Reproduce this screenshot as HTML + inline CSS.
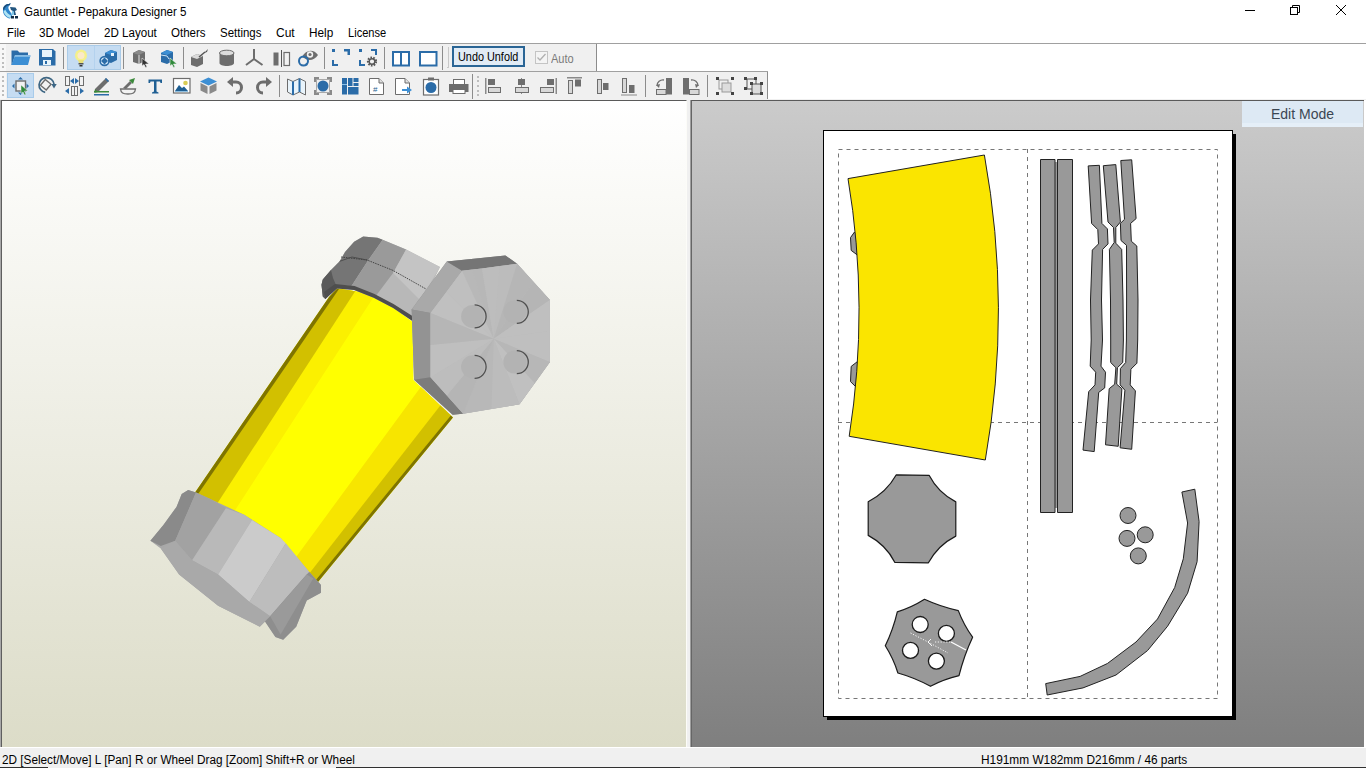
<!DOCTYPE html>
<html><head><meta charset="utf-8">
<style>
*{margin:0;padding:0;box-sizing:border-box}
html,body{width:1366px;height:768px;overflow:hidden;background:#fff;font-family:"Liberation Sans",sans-serif;font-size:12px;color:#000}
.a{position:absolute}
.t{position:absolute;white-space:nowrap;line-height:14px}
svg{position:absolute;overflow:visible}
</style></head><body>
<!-- title bar -->
<svg class="a" style="left:0;top:0" width="22" height="22" viewBox="0 0 22 22">
<path d="M3,9.5 C3,6 6,4 9,4 L10.5,3 L10,5 C8,6 8,8 9,10 C10,12 12,13 12,16 L10,18.5 C6,18 2.5,14 3,9.5 Z" fill="#2f86cc"/>
<path d="M3.5,11 C4.5,15 7,17.5 10.5,18 L11,15.5 C8.5,14.5 6.5,12.5 5.5,10 Z" fill="#aee3f3"/>
<path d="M3,9.5 C3,6 6,4 9,4 L10.5,3 L10,5 C7,5.5 5,7 4,10 Z" fill="#1d4f7c"/>
<path d="M10,7 L15.5,7.5 L17,10 L15,11 L16,15 L14,15 L13,11 L11,10 Z" fill="#22557f"/>
<path d="M12,11 L14,11.5 L13.5,15.5 L11.5,15 Z" fill="#7cc6e8"/>
<rect x="11" y="16" width="3" height="2.5" fill="#0f2a44"/><rect x="15" y="16" width="3" height="2.5" fill="#0f2a44"/>
</svg>
<div class="t" style="left:24px;top:5px;font-size:12px;transform:scaleX(0.963);transform-origin:0 0">Gauntlet - Pepakura Designer 5</div>
<svg style="left:1240px;top:0" width="126" height="22">
<line x1="1245" y1="10.5" x2="1255" y2="10.5" stroke="#000" transform="translate(-1240,0)"/>
<g transform="translate(-1240,0)" fill="none" stroke="#000" stroke-width="1">
<rect x="1290.5" y="7.5" width="7" height="7"/>
<path d="M1292.5,7.5 V5.5 H1299.5 V12.5 H1297.5"/>
<path d="M1336,5 L1346,15 M1346,5 L1336,15"/>
</g>
</svg>
<!-- menu -->
<div class="t" style="left:7px;top:26px;transform:scaleX(0.94);transform-origin:0 0">File</div>
<div class="t" style="left:39px;top:26px;transform:scaleX(0.98);transform-origin:0 0">3D Model</div>
<div class="t" style="left:104px;top:26px;transform:scaleX(0.965);transform-origin:0 0">2D Layout</div>
<div class="t" style="left:171px;top:26px;transform:scaleX(0.96);transform-origin:0 0">Others</div>
<div class="t" style="left:220px;top:26px;transform:scaleX(0.955);transform-origin:0 0">Settings</div>
<div class="t" style="left:276px;top:26px">Cut</div>
<div class="t" style="left:309px;top:26px;transform:scaleX(0.98);transform-origin:0 0">Help</div>
<div class="t" style="left:348px;top:26px;transform:scaleX(0.925);transform-origin:0 0">License</div>
<div class="a" style="left:0;top:43px;width:1366px;height:1px;background:#a0a0a0"></div>
<!-- toolbars -->
<div class="a" style="left:0;top:44px;width:597px;height:27px;background:#f0f0f0"></div>
<div class="a" style="left:0;top:71px;width:768px;height:1px;background:#a0a0a0"></div>
<div class="a" style="left:0;top:72px;width:767px;height:28px;background:#f0f0f0"></div>
<div class="a" style="left:0;top:44px;width:6px;height:27px;background:#f7f7f7"></div>
<div class="a" style="left:2px;top:48px;width:2px;height:2px;background:#bdbdbd"></div><div class="a" style="left:2px;top:53px;width:2px;height:2px;background:#bdbdbd"></div><div class="a" style="left:2px;top:57px;width:2px;height:2px;background:#bdbdbd"></div><div class="a" style="left:2px;top:62px;width:2px;height:2px;background:#bdbdbd"></div><div class="a" style="left:2px;top:66px;width:2px;height:2px;background:#bdbdbd"></div>
<svg style="left:11px;top:49px" width="20" height="17" viewBox="0 0 20 17"><path d="M0.5,1.5 H6.5 L8.5,3.5 H17 V6 H4 L1,16 H0.5 Z" fill="#2b6ca8"/><path d="M4,6.5 H19.5 L17,16 H0.5 Z" fill="#3d8fd4"/><path d="M4,6.5 H19.5 L19,8 H3.6 Z" fill="#7db7e3"/></svg>
<svg style="left:39px;top:49px" width="17" height="17" viewBox="0 0 17 17"><path d="M0,0 H14 L16.5,2.5 V16.5 H0 Z" fill="#2b6ca8"/><rect x="3" y="1" width="10" height="7" fill="#e8f4fb"/><rect x="4" y="11" width="8" height="5" fill="#e8f4fb"/><rect x="6" y="12" width="2" height="3" fill="#2b6ca8"/></svg>
<div class="a" style="left:63px;top:47px;width:1px;height:22px;background:#8c8c8c"></div>
<div class="a" style="left:67px;top:45px;width:54px;height:25px;background:#c5dcf2;border:1px solid #aacbe8"></div>
<div class="a" style="left:94px;top:46px;width:1px;height:23px;background:#b4d2ee"></div>
<svg style="left:73px;top:49px" width="16" height="18" viewBox="0 0 16 18"><circle cx="8" cy="6.5" r="6" fill="#f4f08a"/><circle cx="8" cy="6.5" r="3.5" fill="#fbe9c8"/><path d="M5,11 H11 L10,14 H6 Z" fill="#e8e07a"/><rect x="5.5" y="14" width="5" height="1.5" fill="#555"/><rect x="6.5" y="16" width="3" height="1.5" fill="#333"/></svg>
<svg style="left:99px;top:50px" width="19" height="17" viewBox="0 0 19 17"><path d="M6,3 L12,0 L18,2 V10 L12,13 L6,11 Z" fill="#2b6ca8"/><path d="M6,3 L12,0 L18,2 L12,5 Z" fill="#3d8fd4"/><rect x="12" y="3" width="3" height="3" fill="#e6f2fb"/><circle cx="5.5" cy="11" r="5.2" fill="#2b6ca8"/><circle cx="5.5" cy="11" r="3.6" fill="#dcefff"/><path d="M5.5,7.4 L9,11 L5.5,14.6 L2,11 Z" fill="#2b6ca8"/></svg>
<div class="a" style="left:123px;top:47px;width:1px;height:22px;background:#8c8c8c"></div>
<svg style="left:132px;top:50px" width="18" height="18" viewBox="0 0 18 18"><path d="M1,3 L7,0 L13,2 V11 L7,14 L1,12 Z" fill="#6d6d6d"/><path d="M1,3 L7,0 L13,2 L7,5 Z" fill="#8a8a8a"/><path d="M7,5 V14" stroke="#e8e8e8" stroke-width="1"/><path d="M10,8 L17,14 L13.5,14 L15,17 L13.5,17.5 L12,14.5 L10,16 Z" fill="#333" stroke="#eee" stroke-width="0.6"/></svg>
<svg style="left:160px;top:50px" width="18" height="18" viewBox="0 0 18 18"><path d="M1,3 L7,0 L13,2 V11 L7,14 L1,12 Z" fill="#2b6ca8"/><path d="M1,3 L7,0 L13,2 L7,5 Z" fill="#3d8fd4"/><path d="M1,5 L7,6 L9,9" stroke="#cfe6f7" stroke-width="1" fill="none"/><path d="M10,8 L17,14 L13.5,14 L15,17 L13.5,17.5 L12,14.5 L10,16 Z" fill="#2f8a3a" stroke="#eee" stroke-width="0.6"/></svg>
<div class="a" style="left:183px;top:47px;width:1px;height:22px;background:#8c8c8c"></div>
<svg style="left:190px;top:49px" width="19" height="19" viewBox="0 0 19 19"><path d="M1,8 L7,5 L13,7 V15 L7,18 L1,16 Z" fill="#6d6d6d"/><path d="M1,8 L7,5 L13,7 L7,10 Z" fill="#dadada"/><path d="M9,8 L15,3" stroke="#555" stroke-width="1.5"/><path d="M14,4 L18,0 L17,3 Z" fill="#555"/></svg>
<svg style="left:219px;top:50px" width="16" height="17" viewBox="0 0 16 17"><path d="M0.5,3 V13 C0.5,17 15,17 15,13 V3 Z" fill="#6d6d6d"/><ellipse cx="7.75" cy="3" rx="7.25" ry="2.8" fill="#dcdcdc" stroke="#6d6d6d" stroke-width="1"/></svg>
<svg style="left:245px;top:49px" width="19" height="18" viewBox="0 0 19 18"><path d="M9,0 V10 L1,16 M9,10 L17.5,16" stroke="#6d6d6d" stroke-width="2" fill="none"/></svg>
<svg style="left:273px;top:50px" width="18" height="18" viewBox="0 0 18 18"><rect x="0.5" y="2.5" width="5" height="13" fill="#6d6d6d"/><rect x="8" y="0" width="1" height="17" fill="#555"/><rect x="11" y="2.5" width="5.5" height="13" fill="#f2f2f2" stroke="#6d6d6d" stroke-width="1.2"/></svg>
<svg style="left:298px;top:49px" width="21" height="18" viewBox="0 0 21 18"><path d="M4,8 C8,0 16,0 20,6 C16,12 10,12 6,9 Z" fill="#6d6d6d"/><circle cx="12" cy="5.5" r="3.2" fill="#f0f0f0"/><circle cx="12" cy="5.5" r="1.6" fill="#6d6d6d"/><circle cx="5.5" cy="12" r="4.5" fill="none" stroke="#2b6ca8" stroke-width="2"/><path d="M7,15 L10,13 L9,17 Z" fill="#2b6ca8"/></svg>
<div class="a" style="left:324px;top:47px;width:1px;height:22px;background:#8c8c8c"></div>
<svg style="left:332px;top:49px" width="19" height="18" viewBox="0 0 19 18"><g fill="#2b6ca8"><rect x="0" y="0" width="3" height="3"/><path d="M12,0 H18 V6 H15.5 V2.5 H12 Z"/><path d="M0,11 H2 V15 H6 V17 H0 Z"/><path d="M16,11 H18 V17 H12 V15 H16 Z" fill="#2b6ca8" opacity="0"/></g></svg>
<svg style="left:359px;top:49px" width="19" height="18" viewBox="0 0 19 18"><g fill="#2b6ca8"><rect x="0" y="0" width="3" height="3"/><path d="M12,0 H18 V6 H16 V2 H12 Z"/><path d="M0,11 H2 V15 H6 V17 H0 Z"/></g><circle cx="13" cy="12.5" r="4" fill="none" stroke="#555" stroke-width="2.2" stroke-dasharray="1.6,1.2"/><circle cx="13" cy="12.5" r="2.8" fill="none" stroke="#555" stroke-width="1.4"/></svg>
<div class="a" style="left:384px;top:47px;width:1px;height:22px;background:#8c8c8c"></div>
<svg style="left:392px;top:51px" width="18" height="16" viewBox="0 0 18 16"><rect x="1" y="1" width="16" height="13.5" fill="#fff" stroke="#2b6ca8" stroke-width="2"/><rect x="8" y="1" width="2" height="13.5" fill="#2b6ca8"/></svg>
<svg style="left:419px;top:51px" width="19" height="16" viewBox="0 0 19 16"><rect x="1" y="1" width="16.5" height="13.5" fill="#fff" stroke="#2b6ca8" stroke-width="2"/></svg>
<div class="a" style="left:442px;top:46px;width:1px;height:24px;background:#8c8c8c"></div>
<div class="a" style="left:447px;top:47px;width:2px;height:21px;border-right:1px solid #c8c8c8;border-bottom:1px solid #c8c8c8"></div>
<div class="a" style="left:452px;top:46px;width:73px;height:21px;background:#e1ebf5;border:2px solid #2a6595"></div>
<div class="t" style="left:458px;top:50px;font-size:12px;transform:scaleX(0.905);transform-origin:0 0">Undo Unfold</div>
<svg style="left:535px;top:51px" width="14" height="13" viewBox="0 0 14 13"><rect x="0.5" y="0.5" width="12" height="12" fill="#f4f4f4" stroke="#c4c4c4"/><path d="M2.5,6.5 L5,9 L10.5,3" fill="none" stroke="#b0b0b0" stroke-width="1.3"/></svg>
<div class="t" style="left:551px;top:52px;font-size:12px;color:#7a7a7a;transform:scaleX(0.92);transform-origin:0 0">Auto</div>
<div class="a" style="left:596px;top:44px;width:1px;height:27px;background:#8c8c8c"></div>
<div class="a" style="left:0;top:72px;width:6px;height:28px;background:#f7f7f7"></div>
<div class="a" style="left:2px;top:76px;width:2px;height:2px;background:#bdbdbd"></div><div class="a" style="left:2px;top:80px;width:2px;height:2px;background:#bdbdbd"></div><div class="a" style="left:2px;top:85px;width:2px;height:2px;background:#bdbdbd"></div><div class="a" style="left:2px;top:90px;width:2px;height:2px;background:#bdbdbd"></div><div class="a" style="left:2px;top:94px;width:2px;height:2px;background:#bdbdbd"></div>
<div class="a" style="left:7px;top:73px;width:27px;height:25px;background:#c5dcf2;border:1px solid #a8cbea"></div>
<svg style="left:12px;top:77px" width="18" height="19" viewBox="0 0 18 19"><path d="M8.5,0 L11,2.5 H6 Z M0,9 L2.5,6.5 V11.5 Z M17,9 L14.5,6.5 V11.5 Z M8.5,18 L6,15.5 H11 Z" fill="#2b6ca8"/><rect x="4" y="4" width="9.5" height="10" fill="#f2f2f2" stroke="#6d6d6d" stroke-width="1.4"/><path d="M9,8 L16,14 L12.5,14 L14,17.5 L12.5,18 L11,15 L9,16.5 Z" fill="#2f8a3a" stroke="#eee" stroke-width="0.5"/></svg>
<svg style="left:37px;top:77px" width="20" height="17" viewBox="0 0 20 17"><path d="M8.2,15.4 A7.5,7.5 0 1 1 17,7" fill="none" stroke="#3d6684" stroke-width="1.7"/><rect x="5" y="4" width="7.5" height="7.5" transform="rotate(40 8.75 7.75)" fill="#f2f2f2" stroke="#6a6a6a" stroke-width="1.3"/><path d="M14.3,7 L19.7,7 L17,11.5 Z" fill="#3d6684"/></svg>
<svg style="left:65px;top:76px" width="20" height="20" viewBox="0 0 20 20"><rect x="0.5" y="0.5" width="4" height="9" fill="#f2f2f2" stroke="#6d6d6d"/><rect x="14.5" y="0.5" width="4" height="9" fill="#f2f2f2" stroke="#6d6d6d"/><path d="M5,5 L9,2 V8 Z M14,5 L10,2 V8 Z" fill="#2b6ca8"/><rect x="6.5" y="10.5" width="6" height="9" fill="#f2f2f2" stroke="#6d6d6d"/><rect x="9" y="10.5" width="1" height="9" fill="#6d6d6d"/><path d="M0,15 L4,12 V18 Z M19,15 L15,12 V18 Z" fill="#2b6ca8"/></svg>
<svg style="left:94px;top:77px" width="16" height="19" viewBox="0 0 16 19"><path d="M1,12 L12,1 L15,4 L4,15 L0.5,15.5 Z" fill="#6d6d6d"/><path d="M1,12 L4,15 L0.5,15.5 Z" fill="#3c8a3c"/><path d="M12,1 L15,4 L14,5 L11,2 Z" fill="#2b6ca8"/><rect x="0" y="14" width="15" height="1.5" fill="#3c8a3c"/><rect x="0" y="17" width="15" height="1.5" fill="#2b6ca8"/></svg>
<svg style="left:120px;top:78px" width="17" height="17" viewBox="0 0 17 17"><path d="M3,10 L10,3 L12,5 L6,11 Z" fill="#6d6d6d"/><path d="M9,2 L15,0 L13,6 Z" fill="#3c8a3c"/><path d="M0.5,11 H15.5 C15,15 13,16 8,16 C3,16 1,15 0.5,11 Z" fill="#f2f2f2" stroke="#6d6d6d" stroke-width="1.3"/></svg>
<svg style="left:148px;top:79px" width="15" height="15" viewBox="0 0 15 15"><path d="M0.5,0.5 H14 V4 H12.5 L12,2.5 H8.5 V12.5 L10.5,13.5 V14.5 H4 V13.5 L6,12.5 V2.5 H2.5 L2,4 H0.5 Z" fill="#1f5f93"/></svg>
<svg style="left:173px;top:78px" width="18" height="16" viewBox="0 0 18 16"><rect x="0.5" y="0.5" width="16.5" height="14.5" fill="#fff" stroke="#6d6d6d" stroke-width="1.2"/><circle cx="12.5" cy="5" r="2.3" fill="#d8cc55"/><path d="M2,13 L6,7 L9,10 L11,8.5 L15,13 Z" fill="#1f5f93"/><rect x="2" y="13" width="13" height="1" fill="#8fbfe0"/></svg>
<svg style="left:200px;top:77px" width="18" height="18" viewBox="0 0 18 18"><path d="M8.5,0.5 L17,4.5 L8.5,8.5 L0,4.5 Z" fill="#3d8fd4"/><path d="M0.5,6 L7.5,9.5 V17 L0.5,13.5 Z" fill="#8a8a8a"/><path d="M16.5,6 L9.5,9.5 V17 L16.5,13.5 Z" fill="#8a8a8a"/></svg>
<svg style="left:227px;top:77px" width="17" height="18" viewBox="0 0 17 18"><path d="M5,5 H9 A5.5,5.5 0 0 1 9,16" fill="none" stroke="#6d6d6d" stroke-width="3"/><path d="M0,5 L6,0 V10 Z" fill="#6d6d6d"/></svg>
<svg style="left:255px;top:77px" width="17" height="18" viewBox="0 0 17 18"><path d="M12,5 H8 A5.5,5.5 0 0 0 8,16" fill="none" stroke="#6d6d6d" stroke-width="3"/><path d="M17,5 L11,0 V10 Z" fill="#6d6d6d"/></svg>
<div class="a" style="left:279px;top:75px;width:1px;height:22px;background:#8c8c8c"></div>
<svg style="left:287px;top:78px" width="20" height="18" viewBox="0 0 20 18"><path d="M0.5,1 L6,3.5 L12.5,0.5 L18.5,3.5 V17 L12.5,14 L6,17 L0.5,14 Z" fill="#e9f4fb" stroke="#6d6d6d" stroke-width="1"/><rect x="5" y="3.5" width="2" height="13.5" fill="#2b6ca8"/><rect x="11.5" y="0.5" width="2" height="13.5" fill="#2b6ca8"/></svg>
<svg style="left:314px;top:77px" width="19" height="19" viewBox="0 0 19 19"><path d="M0,0 H5 V2 H2 V5 H0 Z M18,0 H13 V2 H16 V5 H18 Z M0,18 H5 V16 H2 V13 H0 Z M18,18 H13 V16 H16 V13 H18 Z" fill="#8a8a8a"/><rect x="2.5" y="2.5" width="13" height="13" fill="none" stroke="#aaa" stroke-width="1"/><circle cx="9" cy="9" r="5.5" fill="#2b6ca8"/></svg>
<svg style="left:342px;top:78px" width="17" height="17" viewBox="0 0 17 17"><g fill="#2b6ca8"><rect x="0" y="0" width="5" height="16.5"/><rect x="6" y="0" width="4.5" height="8"/><rect x="11.5" y="0" width="5" height="4"/><rect x="11.5" y="5" width="5" height="3"/><rect x="6" y="9" width="10.5" height="7.5"/></g><rect x="0" y="6" width="5" height="1" fill="#8cc0e6"/></svg>
<svg style="left:369px;top:78px" width="16" height="18" viewBox="0 0 16 18"><path d="M0.5,0.5 H10 L14.5,5 V16.5 H0.5 Z" fill="#fff" stroke="#6d6d6d" stroke-width="1"/><path d="M10,0.5 V5 H14.5" fill="#e0e0e0" stroke="#6d6d6d" stroke-width="1"/><text x="4" y="14" font-size="8" font-family="Liberation Sans" fill="#1f5f93">#</text></svg>
<svg style="left:395px;top:78px" width="18" height="18" viewBox="0 0 18 18"><path d="M0.5,0.5 H10 L14.5,5 V16.5 H0.5 Z" fill="#fff" stroke="#6d6d6d" stroke-width="1"/><path d="M10,0.5 V5 H14.5" fill="#e0e0e0" stroke="#6d6d6d" stroke-width="1"/><path d="M7,11 H12 V8.5 L17,12 L12,15.5 V13 H7 Z" fill="#3d8fd4"/></svg>
<svg style="left:423px;top:77px" width="17" height="19" viewBox="0 0 17 19"><rect x="0.5" y="2.5" width="15" height="15.5" fill="#fff" stroke="#6d6d6d" stroke-width="1.2"/><rect x="5" y="0.5" width="6" height="3" fill="#6d6d6d"/><circle cx="8" cy="10.5" r="5.5" fill="#2b6ca8"/></svg>
<svg style="left:449px;top:79px" width="20" height="15" viewBox="0 0 20 15"><rect x="4.5" y="0.5" width="11" height="5" fill="#fff" stroke="#6d6d6d" stroke-width="1"/><path d="M0,5 H19.5 V13 H16 V10.5 H4 V13 H0 Z" fill="#6d6d6d"/><rect x="4" y="10.5" width="12" height="4" fill="#fff" stroke="#6d6d6d" stroke-width="1"/></svg>
<div class="a" style="left:472px;top:74px;width:1px;height:25px;background:#8c8c8c"></div>
<div class="a" style="left:477px;top:76px;width:2px;height:2px;background:#bdbdbd"></div><div class="a" style="left:477px;top:80px;width:2px;height:2px;background:#bdbdbd"></div><div class="a" style="left:477px;top:85px;width:2px;height:2px;background:#bdbdbd"></div><div class="a" style="left:477px;top:90px;width:2px;height:2px;background:#bdbdbd"></div><div class="a" style="left:477px;top:94px;width:2px;height:2px;background:#bdbdbd"></div>
<svg style="left:485px;top:78px" width="18" height="17" viewBox="0 0 18 17"><rect x="0" y="0" width="1.5" height="16" fill="#8a8a8a"/><rect x="3" y="1" width="7" height="6" fill="#6e6e6e"/><rect x="3.5" y="9.5" width="12" height="5" fill="#d8d8d8" stroke="#6e6e6e" stroke-width="1"/></svg>
<svg style="left:514px;top:78px" width="16" height="17" viewBox="0 0 16 17"><rect x="7" y="0" width="1" height="16" fill="#8a8a8a"/><rect x="4" y="1" width="7" height="6" fill="#6e6e6e"/><rect x="1.5" y="9.5" width="13" height="5" fill="#d8d8d8" stroke="#6e6e6e" stroke-width="1"/></svg>
<svg style="left:540px;top:78px" width="18" height="17" viewBox="0 0 18 17"><rect x="15.5" y="0" width="1.5" height="16" fill="#8a8a8a"/><rect x="7" y="1" width="7" height="6" fill="#6e6e6e"/><rect x="0.5" y="9.5" width="13" height="5" fill="#d8d8d8" stroke="#6e6e6e" stroke-width="1"/></svg>
<svg style="left:567px;top:77px" width="16" height="18" viewBox="0 0 16 18"><rect x="0" y="0" width="15" height="1.5" fill="#8a8a8a"/><rect x="1.5" y="3.5" width="4" height="13" fill="#d8d8d8" stroke="#6e6e6e" stroke-width="1"/><rect x="8" y="2.5" width="6" height="7" fill="#6e6e6e"/></svg>
<svg style="left:595px;top:79px" width="15" height="15" viewBox="0 0 15 15"><rect x="2.5" y="0.5" width="4" height="14" fill="#d8d8d8" stroke="#6e6e6e" stroke-width="1"/><rect x="8" y="4" width="5.5" height="7" fill="#6e6e6e"/></svg>
<svg style="left:621px;top:78px" width="17" height="18" viewBox="0 0 17 18"><rect x="1.5" y="0.5" width="4" height="14" fill="#d8d8d8" stroke="#6e6e6e" stroke-width="1"/><rect x="8" y="7" width="5.5" height="8" fill="#6e6e6e"/><rect x="0" y="16.5" width="16" height="1" fill="#8a8a8a"/></svg>
<div class="a" style="left:645px;top:75px;width:1px;height:22px;background:#8c8c8c"></div>
<svg style="left:656px;top:78px" width="17" height="18" viewBox="0 0 17 18"><path d="M1,8 A6,6 0 0 1 8,2" fill="none" stroke="#6e6e6e" stroke-width="1.3"/><path d="M0,7 L3,10 L4,6 Z" fill="#6e6e6e"/><rect x="10" y="0" width="6" height="16.5" fill="#6e6e6e"/><rect x="0.5" y="11.5" width="9.5" height="5" fill="#d8d8d8" stroke="#6e6e6e" stroke-width="1"/></svg>
<svg style="left:683px;top:78px" width="17" height="18" viewBox="0 0 17 18"><path d="M8,2 A6,6 0 0 1 15,8" fill="none" stroke="#6e6e6e" stroke-width="1.3"/><path d="M16,7 L13,10 L12,6 Z" fill="#6e6e6e"/><rect x="0" y="0" width="6" height="16.5" fill="#6e6e6e"/><rect x="6.5" y="11.5" width="9.5" height="5" fill="#d8d8d8" stroke="#6e6e6e" stroke-width="1"/></svg>
<div class="a" style="left:707px;top:75px;width:1px;height:22px;background:#8c8c8c"></div>
<svg style="left:716px;top:77px" width="19" height="19" viewBox="0 0 19 19"><rect x="3" y="3" width="9" height="9" fill="none" stroke="#999" stroke-width="1"/><rect x="6" y="6" width="9" height="9" fill="#ddd" stroke="#999" stroke-width="1"/><rect x="0" y="0" width="3" height="3" fill="#444"/><rect x="15" y="0" width="3" height="3" fill="#444"/><rect x="0" y="15" width="3" height="3" fill="#444"/><rect x="15" y="15" width="3" height="3" fill="#444"/></svg>
<svg style="left:744px;top:77px" width="20" height="19" viewBox="0 0 20 19"><rect x="3" y="2" width="9" height="10" fill="none" stroke="#555" stroke-width="1"/><rect x="8" y="7" width="9" height="10" fill="#ddd" stroke="#555" stroke-width="1"/><rect x="0" y="0" width="3" height="3" fill="#444"/><rect x="10" y="0" width="3" height="3" fill="#444"/><rect x="0" y="10" width="3" height="3" fill="#444"/><rect x="6" y="5" width="3" height="3" fill="#444"/><rect x="16" y="5" width="3" height="3" fill="#444"/><rect x="6" y="15" width="3" height="3" fill="#444"/><rect x="16" y="15" width="3" height="3" fill="#444"/></svg>
<div class="a" style="left:767px;top:72px;width:1px;height:27px;background:#8c8c8c"></div>
<!-- views -->
<div class="a" style="left:0;top:99px;width:1366px;height:1px;background:#f0f0f0"></div>
<div class="a" style="left:0;top:100px;width:1px;height:647px;background:#a8a8a8"></div>
<div class="a" style="left:1px;top:100px;width:686px;height:647px;background:linear-gradient(#ffffff,#dcdcc8);border-top:1px solid #5a5a5a;border-left:1px solid #5f5f5f;border-right:1px solid #fcfcf8"></div>
<div class="a" style="left:687px;top:100px;width:3px;height:647px;background:#f0f0f0"></div>
<div class="a" style="left:690px;top:100px;width:1px;height:647px;background:#a0a0a0"></div>
<div class="a" style="left:691px;top:100px;width:673px;height:647px;background:linear-gradient(#cbcbcb,#7f7f7f);border-top:1px solid #5a5a5a;border-left:1px solid #666"></div>
<svg style="left:0;top:0" width="1366" height="768" viewBox="0 0 1366 768">
<defs><clipPath id="tc"><polygon points="329.0,297.0 337.5,288.3 362.5,292.5 387.5,302.9 412.5,321.7 413.5,380.0 453.0,417.5 318.0,582.0 194.0,494.0"/></clipPath></defs>
<polygon points="329.0,297.0 337.5,288.3 362.5,292.5 387.5,302.9 412.5,321.7 413.5,380.0 453.0,417.5 318.0,582.0 194.0,494.0" fill="#ffff00" />
<polygon points="351.8,250.0 361.8,250.0 121.3,600.0 111.3,600.0" fill="none" clip-path="url(#tc)"/>
<polygon points="365.8,250.0 404.2,250.0 176.7,600.0 125.3,600.0" fill="#fbf000" clip-path="url(#tc)"/>
<polygon points="361.8,250.0 382.0,250.0 154.5,600.0 121.3,600.0" fill="#d2c000" clip-path="url(#tc)"/>
<polygon points="351.8,250.0 365.8,250.0 125.3,600.0 111.3,600.0" fill="#7f7400" clip-path="url(#tc)"/>
<polygon points="521.1,250.0 586.4,250.0 299.4,600.0 264.6,600.0" fill="#f7e500" clip-path="url(#tc)"/>
<polygon points="561.6,250.0 586.4,250.0 299.4,600.0 288.6,600.0" fill="#d2c000" clip-path="url(#tc)"/>
<polygon points="586.4,250.0 600.4,250.0 313.4,600.0 299.4,600.0" fill="#7f7400" clip-path="url(#tc)"/>
<polygon points="321.5,284.7 322.8,279.5 331.0,270.0 339.7,261.3 345.0,252.1 354.1,241.7 363.2,236.5 377.5,237.8 406.1,249.5 440.0,267.0 413.5,321.7 393.1,308.1 373.6,297.7 354.1,289.9 337.1,288.6 325.4,299.0 322.8,296.4" fill="#b8b8b8" />
<polygon points="321.5,284.7 322.8,279.5 331.0,270.0 339.7,261.3 345.0,252.1 354.1,241.7 363.2,236.5 377.5,237.8 382.7,239.8 368.4,260.0 351.5,286.0 335.0,285.0 325.4,299.0 322.8,296.4" fill="#757575" />
<polygon points="382.7,239.8 406.1,249.5 393.1,273.0 376.2,295.5 351.5,286.0 368.4,260.0" fill="#9a9a9a" />
<polygon points="321.5,284.7 322.8,279.5 331.0,270.0 333.0,278.0 336.0,285.0 325.4,299.0 322.8,296.4" fill="#5a5a5a" />
<polygon points="406.1,249.5 440.0,267.0 420.0,300.0 393.1,273.0" fill="#c4c4c4" />
<polygon points="325.4,299.0 337.1,288.6 354.1,289.9 373.6,297.7 393.1,308.1 413.5,321.7 414.0,317.0 393.5,304.0 374.0,293.7 354.5,285.9 335.0,284.0 324.0,292.0" fill="#4e4e4e" />
<polyline points="341.0,257.0 367.0,260.0 393.0,270.4 426.0,289.0" fill="none" stroke="#3a3a3a" stroke-width="0.9" stroke-dasharray="1.5,1"/>
<polyline points="339.7,261.3 352.0,257.0 367.0,260.0" fill="none" stroke="#4a4a4a" stroke-width="0.9"/>
<polygon points="411.7,309.4 446.8,261.4 505.4,255.5 517.1,263.7 549.9,300.0 549.9,362.1 519.5,404.3 462.1,413.7 452.7,414.8 414.1,379.7" fill="#8e8e8e" />
<polygon points="411.7,309.4 446.8,261.4 462.1,270.8 430.5,312.9" fill="#a9a9a9" />
<polygon points="446.8,261.4 505.4,255.5 517.1,263.7 482.0,268.4 462.1,270.8" fill="#757575" />
<polygon points="411.7,309.4 430.5,312.9 430.5,377.3 414.1,379.7" fill="#939393" />
<polygon points="414.1,379.7 430.5,377.3 463.2,413.7 452.7,414.8" fill="#7c7c7c" />
<polygon points="430.5,312.9 462.1,270.8 482.0,268.4 517.1,263.7 549.9,300.0 549.9,362.1 519.5,404.3 463.2,413.7 430.5,377.3" fill="#bcbcbc" />
<polygon points="493.7,338.7 430.5,312.9 446.3,291.9" fill="#c0c0c0" />
<polygon points="493.7,338.7 446.3,291.9 462.1,270.8" fill="#bfbfbf" />
<polygon points="493.7,338.7 462.1,270.8 472.1,269.6" fill="#b8b8b8" />
<polygon points="493.7,338.7 472.1,269.6 482.0,268.4" fill="#b7b7b7" />
<polygon points="493.7,338.7 482.0,268.4 499.6,266.0" fill="#bdbdbd" />
<polygon points="493.7,338.7 499.6,266.0 517.1,263.7" fill="#bcbcbc" />
<polygon points="493.7,338.7 517.1,263.7 533.5,281.9" fill="#b6b6b6" />
<polygon points="493.7,338.7 533.5,281.9 549.9,300.0" fill="#b5b5b5" />
<polygon points="493.7,338.7 549.9,300.0 549.9,331.1" fill="#bfbfbf" />
<polygon points="493.7,338.7 549.9,331.1 549.9,362.1" fill="#bfbfbf" />
<polygon points="493.7,338.7 549.9,362.1 534.7,383.2" fill="#b7b7b7" />
<polygon points="493.7,338.7 534.7,383.2 519.5,404.3" fill="#c0c0c0" />
<polygon points="493.7,338.7 519.5,404.3 491.4,409.0" fill="#bcbcbc" />
<polygon points="493.7,338.7 491.4,409.0 463.2,413.7" fill="#b8b8b8" />
<polygon points="493.7,338.7 463.2,413.7 446.9,395.5" fill="#b5b5b5" />
<polygon points="493.7,338.7 446.9,395.5 430.5,377.3" fill="#bdbdbd" />
<polygon points="493.7,338.7 430.5,377.3 430.5,345.1" fill="#bfbfbf" />
<polygon points="493.7,338.7 430.5,345.1 430.5,312.9" fill="#b6b6b6" />
<circle cx="472.6" cy="316.4" r="11.5" fill="#b3b3b3"/>
<path d="M474.6,304.9 A11.5,11.5 0 0 1 474.6,327.9" fill="none" stroke="#505050" stroke-width="1.3"/>
<circle cx="514.8" cy="311.8" r="11.5" fill="#b3b3b3"/>
<path d="M516.8,300.3 A11.5,11.5 0 0 1 516.8,323.3" fill="none" stroke="#505050" stroke-width="1.3"/>
<circle cx="472.6" cy="366.8" r="11.5" fill="#b3b3b3"/>
<path d="M474.6,355.3 A11.5,11.5 0 0 1 474.6,378.3" fill="none" stroke="#505050" stroke-width="1.3"/>
<circle cx="514.8" cy="362.1" r="11.5" fill="#b3b3b3"/>
<path d="M516.8,350.6 A11.5,11.5 0 0 1 516.8,373.6" fill="none" stroke="#505050" stroke-width="1.3"/>
<polygon points="188.2,489.9 196.0,492.6 210.3,499.1 244.2,514.7 280.6,538.1 309.3,572.0 321.0,585.0 321.0,592.8 306.7,600.6 296.2,626.7 283.2,639.7 275.4,637.1 265.0,621.5 259.8,626.7 218.1,605.8 179.1,574.6 160.8,548.5 150.4,540.7 163.4,525.1 176.5,506.9 181.7,493.9" fill="#a8a8a8" />
<polygon points="188.2,489.9 196.0,492.6 175.2,540.7 160.8,545.9 150.4,540.7 163.4,525.1 176.5,506.9 181.7,493.9" fill="#8a8a8a" />
<polygon points="196.0,492.6 210.3,499.1 225.9,508.2 192.1,560.3 175.2,540.7" fill="#a2a2a2" />
<polygon points="225.9,508.2 244.2,514.7 252.0,519.9 218.1,574.6 192.1,560.3" fill="#b9b9b9" />
<polygon points="252.0,519.9 280.6,538.1 285.8,543.3 249.4,601.9 218.1,574.6" fill="#cbcbcb" />
<polygon points="285.8,543.3 309.3,572.0 306.7,574.6 270.2,616.2 249.4,601.9" fill="#bdbdbd" />
<polygon points="160.8,548.5 175.2,540.7 192.1,560.3 218.1,574.6 249.4,601.9 270.2,616.2 265.0,621.5 259.8,626.7 218.1,605.8 179.1,574.6" fill="#a9a9a9" />
<polygon points="309.3,572.0 321.0,585.0 321.0,592.8 306.7,600.6 296.2,626.7 283.2,639.7 275.4,637.1 265.0,621.5 270.2,616.2 306.7,574.6" fill="#8e8e8e" />
<polygon points="306.7,574.6 313.2,578.5 280.6,634.5 270.2,616.2" fill="#9a9a9a" />
<rect x="1232" y="134" width="4" height="586" fill="#000"/>
<rect x="827" y="716" width="409" height="4" fill="#000"/>
<rect x="823.5" y="130.5" width="409" height="586" fill="#fff" stroke="#000" stroke-width="1"/>
<rect x="838.5" y="149.5" width="379" height="549" stroke="#777" stroke-width="1" stroke-dasharray="4,4" fill="none"/>
<line x1="1027.5" y1="149" x2="1027.5" y2="698" stroke="#777" stroke-width="1" stroke-dasharray="4,4" fill="none"/>
<line x1="838" y1="422.5" x2="1217" y2="422.5" stroke="#777" stroke-width="1" stroke-dasharray="4,4" fill="none"/>
<polygon points="854.5,232.0 850.5,237.6 851.2,250.4 858.0,255.5 860.0,240.0" fill="#999999" stroke="#222" stroke-width="1" stroke-linejoin="round"/>
<polygon points="857.5,361.5 851.2,366.4 850.5,381.6 855.5,386.5 860.0,375.0" fill="#999999" stroke="#222" stroke-width="1" stroke-linejoin="round"/>
<path d="M848,178.6 L984.4,155 Q1012,308 985.3,460 L849.2,436.3 Q869.5,307 848,178.6 Z" fill="#fae500" stroke="#222" stroke-width="1"/>
<rect x="1055" y="162" width="2.5" height="346" fill="#999"/>
<rect x="1040.5" y="159.5" width="14.5" height="353" fill="#999999" stroke="#222" stroke-width="1" stroke-linejoin="round"/>
<rect x="1057.5" y="159.5" width="15" height="353" fill="#999999" stroke="#222" stroke-width="1" stroke-linejoin="round"/>
<polygon points="1088.2,165.9 1091.6,223.4 1097.8,229.6 1098.5,243.9 1092.3,250.1 1090.5,300.0 1091.2,340.0 1090.2,366.2 1095.7,372.2 1095.0,384.9 1088.7,391.7 1083.0,450.1 1094.2,451.6 1098.7,392.4 1104.7,387.9 1105.5,372.2 1101.0,366.2 1102.5,340.0 1101.5,300.0 1102.6,249.4 1108.0,243.9 1107.4,228.9 1101.9,223.4 1099.4,165.3" fill="#999999" stroke="#222" stroke-width="1" stroke-linejoin="round"/>
<polygon points="1103.3,165.7 1108.0,222.0 1113.5,227.5 1114.2,242.5 1109.4,249.4 1110.5,300.0 1110.7,340.0 1110.7,362.5 1115.9,367.7 1114.7,384.2 1109.2,388.7 1105.5,444.8 1118.2,446.3 1121.9,388.7 1116.7,384.2 1117.4,367.7 1122.7,362.5 1123.4,340.0 1123.0,300.0 1121.7,249.4 1115.8,243.2 1115.8,227.5 1120.4,222.0 1115.8,164.6" fill="#999999" stroke="#222" stroke-width="1" stroke-linejoin="round"/>
<polygon points="1120.8,160.5 1124.5,219.3 1120.4,223.4 1121.0,240.5 1126.5,245.3 1126.6,300.0 1126.4,340.0 1125.7,362.5 1120.4,368.5 1120.1,384.9 1124.9,390.2 1120.1,447.8 1131.7,449.3 1135.4,390.9 1130.2,384.9 1130.9,369.2 1136.9,363.2 1137.7,340.0 1138.0,300.0 1136.8,246.0 1131.3,241.2 1130.6,223.4 1136.1,218.6 1131.7,159.8" fill="#999999" stroke="#222" stroke-width="1" stroke-linejoin="round"/>
<path d="M896.3,474.8 Q912.7,475.1 929.1,475.3 Q938.2,492.8 955.8,501.9 Q955.8,519.0 955.8,536.1 Q937.9,545.2 928.4,562.8 Q911.6,562.6 894.9,562.4 Q885.8,544.7 868.2,535.4 Q868.2,518.5 868.2,501.7 Q886.4,492.5 896.3,474.8 Z" fill="#999999" stroke="#1a1a1a" stroke-width="1.2" stroke-linejoin="round"/>
<path d="M924.5,599.3 Q940.7,606.8 958.3,610.6 Q963.7,624.8 972.6,637.2 Q963.9,655.8 959.0,675.7 Q944.0,679.2 930.5,686.3 Q914.9,677.8 897.9,673.0 Q893.4,658.6 885.3,645.8 Q893.2,629.5 897.3,611.9 Q911.7,607.4 924.5,599.3 Z" fill="#999999" stroke="#1a1a1a" stroke-width="1.2" stroke-linejoin="round"/>
<circle cx="920.2" cy="624.5" r="8" fill="#fff" stroke="#1a1a1a" stroke-width="1.3"/>
<circle cx="946.4" cy="633.4" r="8" fill="#fff" stroke="#1a1a1a" stroke-width="1.3"/>
<circle cx="910.5" cy="650.4" r="8" fill="#fff" stroke="#1a1a1a" stroke-width="1.3"/>
<circle cx="936.4" cy="661.1" r="8" fill="#fff" stroke="#1a1a1a" stroke-width="1.3"/>
<polyline points="910.5,633 928,642" fill="none" stroke="#fff" stroke-width="0.9" stroke-dasharray="1.2,1.6"/>
<polyline points="931,639 928,642 932,646" fill="none" stroke="#fff" stroke-width="0.9"/>
<polyline points="928,642 948,653" fill="none" stroke="#fff" stroke-width="0.9" stroke-dasharray="1.2,1.6"/>
<polyline points="951,642 966,650" fill="none" stroke="#fff" stroke-width="1.3"/>
<polyline points="935,642 951,642" fill="none" stroke="#fff" stroke-width="0.9" stroke-dasharray="1.2,1.6"/>
<circle cx="1128" cy="515.5" r="8" fill="#999999" stroke="#222" stroke-width="1" stroke-linejoin="round"/>
<circle cx="1127" cy="538.4" r="8" fill="#999999" stroke="#222" stroke-width="1" stroke-linejoin="round"/>
<circle cx="1145.2" cy="534.8" r="8" fill="#999999" stroke="#222" stroke-width="1" stroke-linejoin="round"/>
<circle cx="1138.3" cy="555.9" r="8" fill="#999999" stroke="#222" stroke-width="1" stroke-linejoin="round"/>
<polygon points="1194.8,489.2 1199.1,521.6 1197.1,561.7 1187.6,593.2 1167.6,626.2 1147.5,650.6 1116.0,675.0 1083.0,687.9 1047.2,695.0 1045.7,683.6 1080.1,676.4 1107.4,663.5 1136.0,642.0 1157.5,619.0 1174.7,587.5 1183.3,558.8 1187.6,523.0 1181.9,492.0" fill="#999999" stroke="#222" stroke-width="1" stroke-linejoin="round"/>
</svg>
<div class="a" style="left:1242px;top:101px;width:121px;height:26px;background:#dde9f4;border-bottom:4px solid #e5eff8"></div>
<div class="t" style="left:1271px;top:106px;font-size:14px;line-height:16px;color:#3b4653">Edit Mode</div>
<!-- status -->
<div class="a" style="left:0;top:747px;width:1366px;height:1px;background:#fff"></div>
<div class="a" style="left:0;top:748px;width:1366px;height:20px;background:#f0f0f0"></div>
<div class="t" style="left:2px;top:753px;transform:scaleX(0.98);transform-origin:0 0">2D [Select/Move] L [Pan] R or Wheel Drag [Zoom] Shift+R or Wheel</div>
<div class="t" style="left:981px;top:753px;transform:scaleX(0.988);transform-origin:0 0">H191mm W182mm D216mm / 46 parts</div>
<div class="a" style="left:0;top:767px;width:48px;height:1px;background:#303030"></div>
<div class="a" style="left:336px;top:767px;width:344px;height:1px;background:#303030"></div>
<div class="a" style="left:680px;top:767px;width:50px;height:1px;background:#6a6a6a"></div>
<div class="a" style="left:730px;top:767px;width:636px;height:1px;background:#303030"></div>
</body></html>
